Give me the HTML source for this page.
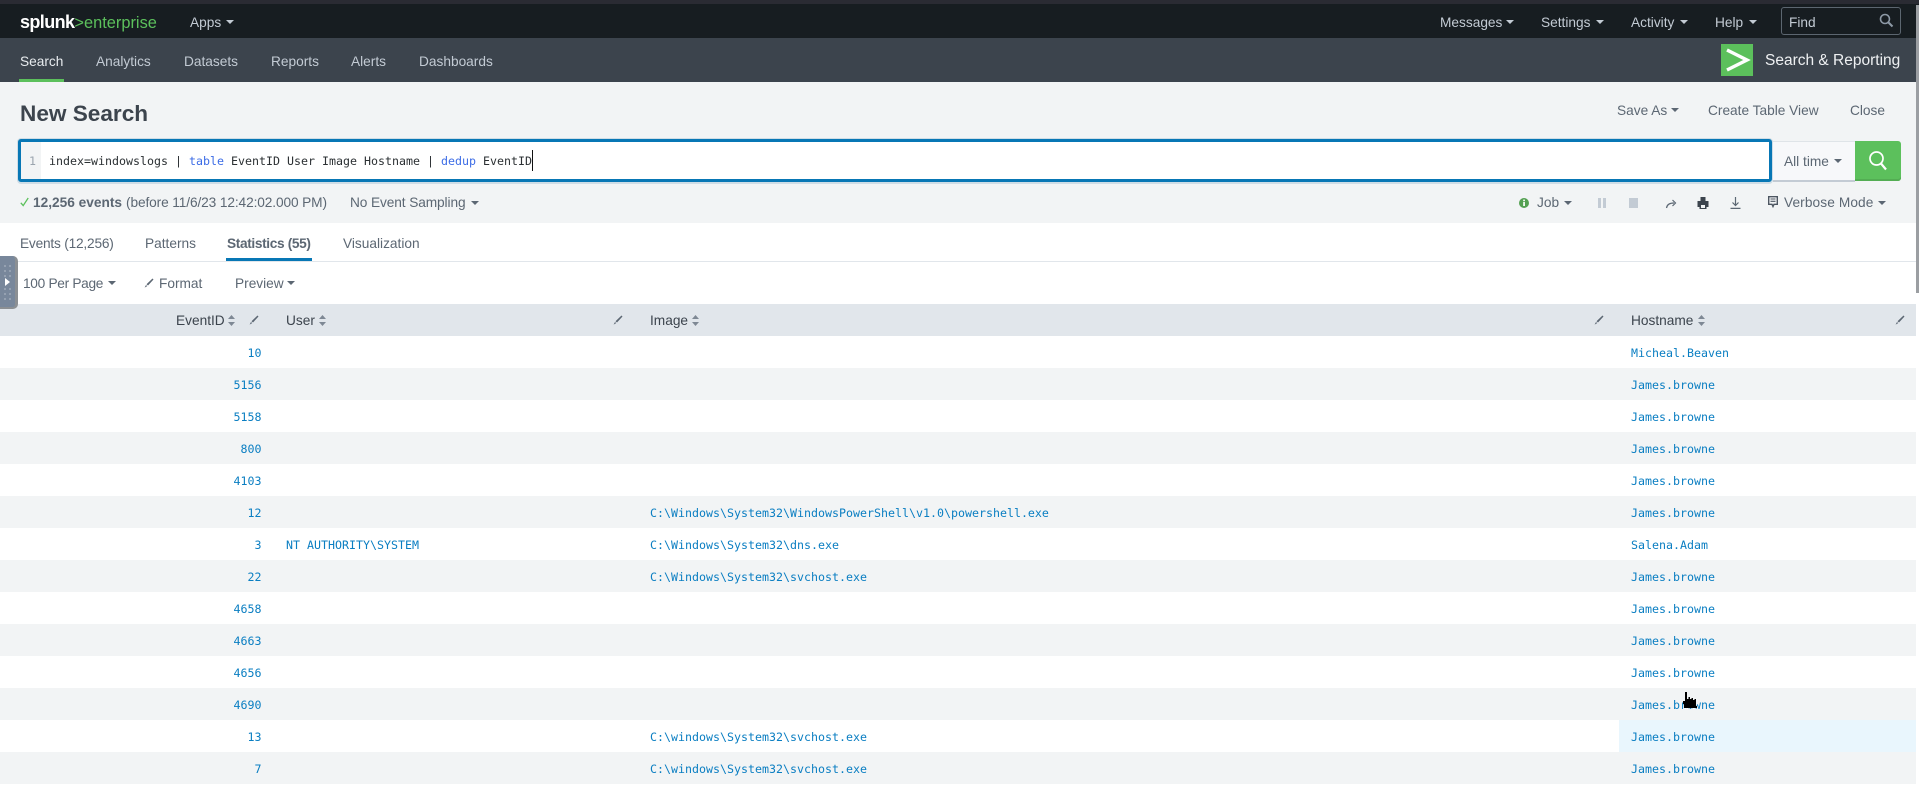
<!DOCTYPE html>
<html><head><meta charset="utf-8"><title>New Search</title>
<style>
html,body{margin:0;padding:0;width:1919px;height:785px;overflow:hidden;background:#fff}
body{position:relative;font-family:"Liberation Sans",sans-serif;font-size:14px;color:#5c6773}
div,span.t,svg{position:absolute}
.t{position:absolute;white-space:nowrap;line-height:20px;font-size:13.7px}
.m{font-family:"DejaVu Sans Mono","Liberation Mono",monospace;font-size:11.63px}
.c{position:absolute;width:0;height:0;border-left:4px solid transparent;border-right:4px solid transparent;border-top:4px solid #5c6773}
.n{color:#c3cbd4}.n2{color:#c3cbd4}
.w .c{border-top-color:#c3cbd4}
.r{position:absolute;left:0;width:1916px;height:32px;background:#fff}
.r.z{background:#f2f4f5}
.r .t{top:7px;color:#0a7ec2}
.id{right:1654.5px}
.u{left:286px}.i{left:650px}.h{left:1631px}
.kw{color:#3c6ce6}
</style></head><body>
<div style="left:0;top:0;width:1919px;height:4px;background:#2a2b33"></div>
<div style="left:0;top:4px;width:1919px;height:34px;background:#171d21"></div>
<div style="left:0;top:38px;width:1919px;height:44px;background:#3c444d"></div>
<div style="left:0;top:82px;width:1919px;height:141px;background:#f2f4f5"></div>

<span class="t" style="left:20px;top:10px;font-size:18px;line-height:24px;color:#fff;font-weight:bold;letter-spacing:-.6px">splunk<span style="color:#5cc05c;font-weight:normal;letter-spacing:0;font-size:16.4px">&gt;enterprise</span></span>

<div class="w">
<span class="t n" style="left:190px;top:13px">Apps</span><i class="c" style="left:226px;top:20px"></i>
<span class="t n" style="left:1440px;top:13px">Messages</span><i class="c" style="left:1506px;top:20px"></i>
<span class="t n" style="left:1541px;top:13px">Settings</span><i class="c" style="left:1596px;top:20px"></i>
<span class="t n" style="left:1631px;top:13px">Activity</span><i class="c" style="left:1680px;top:20px"></i>
<span class="t n" style="left:1715px;top:13px">Help</span><i class="c" style="left:1749px;top:20px"></i>
</div>
<div style="left:1781px;top:7px;width:118px;height:26px;border:1px solid #5c6670;border-radius:3px"></div>
<span class="t n" style="left:1789px;top:13px">Find</span>
<svg style="left:1879px;top:13px" width="15" height="15" viewBox="0 0 15 15" fill="none" stroke="#8d99a6" stroke-width="1.6"><circle cx="6" cy="6" r="4.5"/><path d="M9.5 9.5l4 4" stroke-width="2"/></svg>

<span class="t" style="left:20px;top:52px;color:#e8ecef">Search</span>
<div style="left:19px;top:79px;width:45px;height:3px;background:#5cc05c"></div>
<span class="t n" style="left:96px;top:52px">Analytics</span>
<span class="t n" style="left:184px;top:52px">Datasets</span>
<span class="t n" style="left:271px;top:52px">Reports</span>
<span class="t n" style="left:351px;top:52px">Alerts</span>
<span class="t n" style="left:419px;top:52px">Dashboards</span>

<div style="left:1721px;top:44px;width:32px;height:32px;background:#5cc05c"></div>
<svg style="left:1721px;top:44px" width="32" height="32" viewBox="0 0 32 32" fill="none" stroke="#fff" stroke-width="3.4"><path d="M6 6l20 10L6 26"/></svg>
<span class="t" style="left:1765px;top:51px;font-size:15.5px;color:#eef0f2">Search &amp; Reporting</span>

<span class="t" style="left:20px;top:99px;font-size:22.6px;line-height:30px;font-weight:bold;color:#3c444d">New Search</span>
<span class="t" style="left:1617px;top:101px">Save As</span><i class="c" style="left:1671px;top:108px"></i>
<span class="t" style="left:1708px;top:101px">Create Table View</span>
<span class="t" style="left:1850px;top:101px">Close</span>

<!-- search bar -->
<div style="left:17px;top:138px;width:1756px;height:46px;background:#cfdde6;border-radius:4px"></div>
<div style="left:18px;top:139px;width:1748px;height:37px;border:3px solid #0877b5;border-radius:3px;background:#fff"></div>
<div style="left:21px;top:142px;width:20px;height:37px;background:#f2f4f5"></div>
<span class="t m" style="left:29px;top:151px;color:#9aa4ae">1</span>
<span class="t m" style="left:49px;top:151px;color:#2b3033">index=windowslogs | <span class="kw">table</span> EventID User Image Hostname | <span class="kw">dedup</span> EventID</span>
<div style="left:532px;top:150px;width:1px;height:21px;background:#111"></div>

<div style="left:1773px;top:141px;width:82px;height:38px;background:#f7f8fa;border-top:1px solid #dfe4e8;border-bottom:2px solid #c3cbd4"></div>
<span class="t" style="left:1784px;top:152px">All time</span><i class="c" style="left:1834px;top:159px"></i>
<div style="left:1855px;top:141px;width:46px;height:40px;background:#5cc05c;border-radius:0 3px 3px 0;box-shadow:inset 0 -2px 0 #53ad53"></div>
<svg style="left:1868px;top:150px" width="20" height="21" viewBox="0 0 20 21" fill="none" stroke="#fff" stroke-width="1.7"><circle cx="8.5" cy="8.5" r="6.5"/><path d="M13 13.5l5 6" stroke-width="2.2"/></svg>

<!-- status -->
<svg style="left:20px;top:197px" width="9" height="10" viewBox="0 0 9 10" fill="none" stroke="#5cc05c" stroke-width="1.3"><path d="M.8 5.8l2.4 2.8L8.2 1"/></svg>
<span class="t" style="left:33px;top:193px;font-weight:bold">12,256 events</span>
<span class="t" style="left:126px;top:193px;letter-spacing:-.11px">(before 11/6/23 12:42:02.000 PM)</span>
<span class="t" style="left:350px;top:193px;letter-spacing:-.1px">No Event Sampling</span><i class="c" style="left:471px;top:201px"></i>

<svg style="left:1518px;top:197px" width="12" height="12" viewBox="0 0 12 12"><circle cx="6" cy="6" r="5" fill="#53a051"/><rect x="5.2" y="5" width="1.7" height="4" fill="#fff"/><rect x="5.2" y="2.6" width="1.7" height="1.6" fill="#fff"/></svg>
<span class="t" style="left:1537px;top:193px">Job</span><i class="c" style="left:1564px;top:201px"></i>
<div style="left:1598px;top:198px;width:3px;height:10px;background:#c3cbd4"></div>
<div style="left:1603px;top:198px;width:3px;height:10px;background:#c3cbd4"></div>
<div style="left:1629px;top:198px;width:9px;height:10px;background:#c3cbd4"></div>
<svg style="left:1665px;top:198px" width="12" height="11" viewBox="0 0 12 11" fill="none" stroke="#5c6773" stroke-width="1.2"><path d="M1.5 10C2 6.5 4.5 5 9 5"/><path d="M7.5 2l3 3-3 3"/></svg>
<svg style="left:1697px;top:197px" width="12" height="12" viewBox="0 0 12 12"><path fill="#3c444d" d="M3.5 0h5v4h3v6H9.5v2h-7v-2H.5V4h3zM4 8v3h4V8z"/></svg>
<svg style="left:1730px;top:197px" width="11" height="12" viewBox="0 0 11 12" fill="none" stroke="#5c6773" stroke-width="1.2"><path d="M5.5 0v8M2.5 5.5l3 3 3-3M.5 11.4h10"/></svg>
<svg style="left:1768px;top:196px" width="10" height="12" viewBox="0 0 10 12" fill="none" stroke="#4d5661" stroke-width="1.4"><path d="M.7.7h8.6v7.6H6L5 10.5 4 8.3H.7z"/><path d="M2.5 3h5M2.5 5.3h5" stroke-width="1.1"/></svg>
<span class="t" style="left:1784px;top:193px;letter-spacing:.1px">Verbose Mode</span><i class="c" style="left:1878px;top:201px"></i>

<!-- tabs -->
<span class="t" style="left:20px;top:234px;letter-spacing:-.2px">Events (12,256)</span>
<span class="t" style="left:145px;top:234px">Patterns</span>
<span class="t" style="left:227px;top:234px;font-weight:bold;letter-spacing:-.36px">Statistics (55)</span>
<span class="t" style="left:343px;top:234px">Visualization</span>
<div style="left:0;top:261px;width:1916px;height:1px;background:#e1e6eb"></div>
<div style="left:226px;top:258px;width:86px;height:3px;background:#0877b5"></div>

<span class="t" style="left:23px;top:274px;letter-spacing:-.3px">100 Per Page</span><i class="c" style="left:108px;top:281px"></i>
<svg style="left:144px;top:278px" width="10" height="10" viewBox="0 0 10 10"><path fill="#5c6773" d="M8.5.5l1 1-5.5 6-1.5-1.2zM2 7l1.2 1.1L.6 9.6z"/></svg>
<span class="t" style="left:159px;top:274px">Format</span>
<span class="t" style="left:235px;top:274px">Preview</span><i class="c" style="left:287px;top:281px"></i>

<!-- table header -->
<div style="left:0;top:304px;width:1916px;height:32px;background:#e1e6eb"></div>
<span class="t" style="left:176px;top:311px;color:#3c444d">EventID</span>
<span class="t" style="left:286px;top:311px;color:#3c444d">User</span>
<span class="t" style="left:650px;top:311px;color:#3c444d">Image</span>
<span class="t" style="left:1631px;top:311px;color:#3c444d">Hostname</span>
<svg style="left:228px;top:315px" width="7" height="11" viewBox="0 0 7 11" fill="#7e8894"><path d="M3.5 0L7 4H0zM3.5 11L0 7h7z"/></svg>
<svg style="left:319px;top:315px" width="7" height="11" viewBox="0 0 7 11" fill="#7e8894"><path d="M3.5 0L7 4H0zM3.5 11L0 7h7z"/></svg>
<svg style="left:692px;top:315px" width="7" height="11" viewBox="0 0 7 11" fill="#7e8894"><path d="M3.5 0L7 4H0zM3.5 11L0 7h7z"/></svg>
<svg style="left:1698px;top:315px" width="7" height="11" viewBox="0 0 7 11" fill="#7e8894"><path d="M3.5 0L7 4H0zM3.5 11L0 7h7z"/></svg>
<svg style="left:249px;top:315px" width="10" height="10" viewBox="0 0 10 10"><path fill="#5c6773" d="M8.5.5l1 1-5.5 6-1.5-1.2zM2 7l1.2 1.1L.6 9.6z"/></svg>
<svg style="left:613px;top:315px" width="10" height="10" viewBox="0 0 10 10"><path fill="#5c6773" d="M8.5.5l1 1-5.5 6-1.5-1.2zM2 7l1.2 1.1L.6 9.6z"/></svg>
<svg style="left:1594px;top:315px" width="10" height="10" viewBox="0 0 10 10"><path fill="#5c6773" d="M8.5.5l1 1-5.5 6-1.5-1.2zM2 7l1.2 1.1L.6 9.6z"/></svg>
<svg style="left:1895px;top:315px" width="10" height="10" viewBox="0 0 10 10"><path fill="#5c6773" d="M8.5.5l1 1-5.5 6-1.5-1.2zM2 7l1.2 1.1L.6 9.6z"/></svg>

<!-- rows -->
<div class="r" style="top:336px"><span class="t m id">10</span><span class="t m h">Micheal.Beaven</span></div>
<div class="r z" style="top:368px"><span class="t m id">5156</span><span class="t m h">James.browne</span></div>
<div class="r" style="top:400px"><span class="t m id">5158</span><span class="t m h">James.browne</span></div>
<div class="r z" style="top:432px"><span class="t m id">800</span><span class="t m h">James.browne</span></div>
<div class="r" style="top:464px"><span class="t m id">4103</span><span class="t m h">James.browne</span></div>
<div class="r z" style="top:496px"><span class="t m id">12</span><span class="t m i">C:\Windows\System32\WindowsPowerShell\v1.0\powershell.exe</span><span class="t m h">James.browne</span></div>
<div class="r" style="top:528px"><span class="t m id">3</span><span class="t m u">NT AUTHORITY\SYSTEM</span><span class="t m i">C:\Windows\System32\dns.exe</span><span class="t m h">Salena.Adam</span></div>
<div class="r z" style="top:560px"><span class="t m id">22</span><span class="t m i">C:\Windows\System32\svchost.exe</span><span class="t m h">James.browne</span></div>
<div class="r" style="top:592px"><span class="t m id">4658</span><span class="t m h">James.browne</span></div>
<div class="r z" style="top:624px"><span class="t m id">4663</span><span class="t m h">James.browne</span></div>
<div class="r" style="top:656px"><span class="t m id">4656</span><span class="t m h">James.browne</span></div>
<div class="r z" style="top:688px"><span class="t m id">4690</span><span class="t m h">James.browne</span></div>
<div class="r" style="top:720px"><div style="left:1619px;top:0;width:297px;height:32px;background:#e9f6fd"></div><span class="t m id">13</span><span class="t m i">C:\windows\System32\svchost.exe</span><span class="t m h">James.browne</span></div>
<div class="r z" style="top:752px"><span class="t m id">7</span><span class="t m i">C:\windows\System32\svchost.exe</span><span class="t m h">James.browne</span></div>
<div class="r" style="top:784px"></div>

<!-- side handle -->
<div style="left:0;top:256px;width:15px;height:51px;background:#78879b;border-right:3px solid #8b8f93;border-bottom:2px solid #8b8f93;border-radius:0 5px 5px 0"></div>
<svg style="left:0;top:256px" width="18" height="52" viewBox="0 0 18 52" fill="#95a1b1"><path d="M4 9h2v2H4zM9 9h2v2H9zM4 14h2v2H4zM9 14h2v2H9zM4 19h2v2H4zM9 19h2v2H9zM4 32h2v2H4zM9 32h2v2H9zM4 37h2v2H4zM9 37h2v2H9zM4 42h2v2H4zM9 42h2v2H9z"/><path fill="#fff" d="M5 22l5 4-5 4z"/></svg>

<!-- cursor -->
<svg style="left:1683px;top:692px" width="15" height="17" viewBox="0 0 15 17"><path fill="#000" d="M2 0h2v7h1.5V5H7v2h1.5V6H10v2h1.5V7H13v7h1v2H1v-4H0V9h2z"/><path stroke="#fff" stroke-width=".6" stroke-dasharray="1 1" fill="none" d="M0 16.6h15"/></svg>

<!-- page scrollbar -->
<div style="left:1916px;top:5px;width:3px;height:288px;background:#9b9ea2"></div>
</body></html>
